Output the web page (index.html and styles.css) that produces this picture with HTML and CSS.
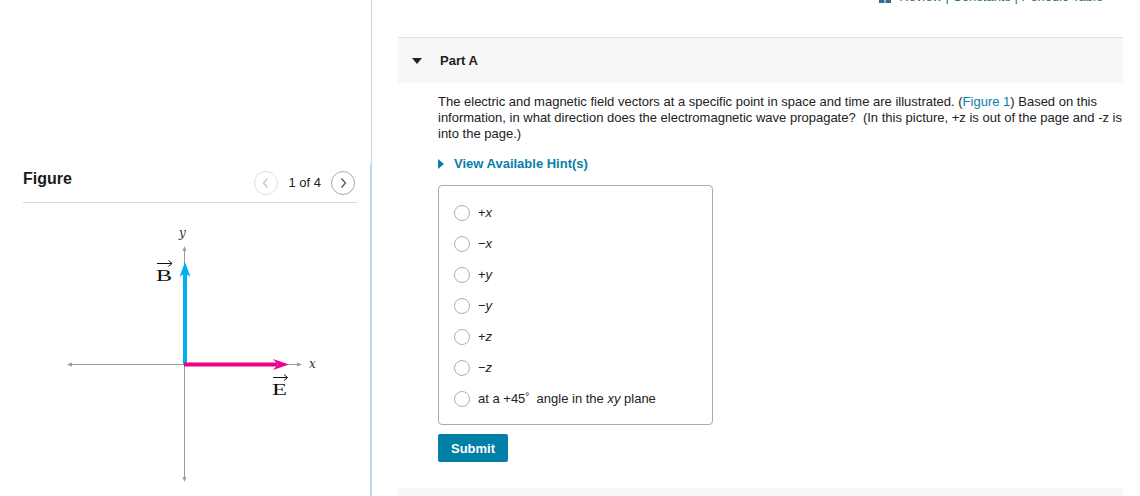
FILE: index.html
```html
<!DOCTYPE html>
<html>
<head>
<meta charset="utf-8">
<link rel="stylesheet" href="styles.css">
</head>
<body>
<div class="page">
  <aside class="left">
    <section class="figure-panel">
      <div class="fig-head">
        <h2 class="fig-title">Figure</h2>
        <div class="pager">
          <span class="pg-btn pg-prev"><svg width="10" height="12" viewBox="0 0 10 12"><path d="M6.5 1.5 L2.5 6 L6.5 10.5" fill="none" stroke="#c4c4c4" stroke-width="1.3"/></svg></span>
          <span class="pg-count">1 of 4</span>
          <span class="pg-btn pg-next"><svg width="10" height="12" viewBox="0 0 10 12"><path d="M3.5 1.5 L7.5 6 L3.5 10.5" fill="none" stroke="#555" stroke-width="1.3"/></svg></span>
        </div>
      </div>
      <svg class="fig-svg" width="334" height="293" viewBox="23 203 334 293">
        <g stroke="#9a9a9a" stroke-width="1" fill="#9a9a9a">
          <line x1="184.5" y1="249" x2="184.5" y2="479"/>
          <line x1="70" y1="364.5" x2="299" y2="364.5"/>
          <path d="M184.5 246 L182.5 251 L186.5 251 Z" stroke="none"/>
          <path d="M184.5 482 L182.5 477 L186.5 477 Z" stroke="none"/>
          <path d="M67 364.5 L72 362.5 L72 366.5 Z" stroke="none"/>
          <path d="M302 364.5 L297 362.5 L297 366.5 Z" stroke="none"/>
        </g>
        <line x1="185" y1="365" x2="185" y2="273" stroke="#00aeef" stroke-width="4"/>
        <path d="M185 262 L190.5 277 L185 273 L179.5 277 Z" fill="#00aeef"/>
        <line x1="184" y1="364.5" x2="277" y2="364.5" stroke="#ec008c" stroke-width="4"/>
        <path d="M289 364.5 L273 359 L278 364.5 L273 370 Z" fill="#ec008c"/>
        <text x="179" y="237" class="ax-lbl">y</text>
        <text x="309" y="368" class="ax-lbl">x</text>
        <text x="156" y="280.5" class="vec-lbl" textLength="16" lengthAdjust="spacingAndGlyphs">B</text>
        <path d="M157 263.5 L171.5 263.5" stroke="#111" stroke-width="1"/>
        <path d="M168.5 260.5 L172 263.5 L168.5 266.5" fill="none" stroke="#111" stroke-width="1"/>
        <text x="272" y="394.5" class="vec-lbl" textLength="15" lengthAdjust="spacingAndGlyphs">E</text>
        <path d="M273 377.5 L287 377.5" stroke="#111" stroke-width="1"/>
        <path d="M284 374.5 L287.5 377.5 L284 380.5" fill="none" stroke="#111" stroke-width="1"/>
      </svg>
    </section>
  </aside>
  <main class="right">
    <div class="topbar">
      <span class="toplinks">
        <svg class="book" width="12" height="10" viewBox="0 0 12 10"><path d="M0 0 H5.5 V10 H0 Z M6.5 0 H12 V10 H6.5 Z" fill="#2c6f8e"/></svg>
        <span>Review | Constants | Periodic Table</span>
      </span>
    </div>
    <div class="part-head">
      <span class="tri-down"></span>
      <span class="part-title">Part A</span>
    </div>
    <div class="part-body">
      <p class="question">The electric and magnetic field vectors at a specific point in space and time are illustrated. (<a class="fig-link">Figure 1</a>) Based on this<br>information, in what direction does the electromagnetic wave propagate?&nbsp; (In this picture, +z is out of the page and -z is<br>into the page.)</p>
      <div class="hint"><span class="tri-right"></span><span>View Available Hint(s)</span></div>
      <div class="options">
        <label class="opt"><span class="radio"></span><span class="opt-text">+<i>x</i></span></label>
        <label class="opt"><span class="radio"></span><span class="opt-text">−<i>x</i></span></label>
        <label class="opt"><span class="radio"></span><span class="opt-text">+<i>y</i></span></label>
        <label class="opt"><span class="radio"></span><span class="opt-text">−<i>y</i></span></label>
        <label class="opt"><span class="radio"></span><span class="opt-text">+<i>z</i></span></label>
        <label class="opt"><span class="radio"></span><span class="opt-text">−<i>z</i></span></label>
        <label class="opt"><span class="radio"></span><span class="opt-text">at a +45<sup class="deg">°</sup>&nbsp; angle in the <i>xy</i> plane</span></label>
      </div>
      <button class="submit">Submit</button>
    </div>
    <div class="next-part"></div>
  </main>
</div>
</body>
</html>
```
FILE: styles.css
```css
html, body {
  margin: 0;
  padding: 0;
  background: #fff;
}
body {
  font-family: "Liberation Sans", Arial, sans-serif;
  color: #222;
  width: 1140px;
  height: 496px;
  overflow: hidden;
}
.page {
  display: flex;
  height: 496px;
}
.left {
  width: 371px;
  flex: none;
  border-right: 1px solid #c5d6e6;
  display: flex;
  flex-direction: column;
  justify-content: flex-end;
}
.figure-panel {
  height: 333px;
  padding: 0 13px 0 23px;
  border-right: 1px solid #c5d6e6;
  box-sizing: border-box;
  width: 371px;
}
.fig-head {
  display: flex;
  align-items: center;
  justify-content: space-between;
  height: 39px;
  border-bottom: 1px solid #d9d9d9;
  padding-right: 2px;
}
.fig-title {
  margin: 0;
  font-size: 16px;
  font-weight: bold;
  color: #1a1a1a;
  position: relative;
  top: -4px;
}
.pager {
  display: flex;
  align-items: center;
  gap: 10px;
}
.pg-btn {
  width: 22px;
  height: 22px;
  border-radius: 50%;
  display: flex;
  align-items: center;
  justify-content: center;
}
.pg-prev { border: 1px solid #dedede; }
.pg-next { border: 1px solid #a8a8a8; }
.pg-count {
  font-size: 13px;
  color: #222;
}
.fig-svg {
  display: block;
}
.ax-lbl {
  font-family: "DejaVu Serif", "Liberation Serif", serif;
  font-style: italic;
  font-size: 12px;
  fill: #333;
}
.vec-lbl {
  font-family: "Liberation Serif", serif;
  font-size: 16px;
  fill: #111;
}
.right {
  flex: 1;
  min-width: 0;
  padding: 0 17px 0 26px;
  display: flex;
  flex-direction: column;
}
.topbar {
  height: 37px;
  border-bottom: 1px solid #e2e2e2;
  display: flex;
  justify-content: flex-end;
  align-items: flex-start;
  padding-right: 20px;
}
.toplinks {
  display: flex;
  align-items: center;
  gap: 8px;
  font-size: 13px;
  color: #2c6f8e;
  margin-top: -11px;
}
.book { position: relative; top: 1px; }
.part-head {
  height: 45px;
  background: #f7f7f7;
  display: flex;
  align-items: center;
  padding-left: 14px;
}
.tri-down {
  width: 0;
  height: 0;
  border-left: 5px solid transparent;
  border-right: 5px solid transparent;
  border-top: 6px solid #222;
  margin-right: 18px;
}
.part-title {
  font-size: 13px;
  font-weight: bold;
  color: #222;
}
.part-body {
  padding-left: 40px;
  flex: 1;
}
.question {
  margin: 11px 0 0;
  font-size: 13px;
  line-height: 16px;
  color: #222;
  white-space: nowrap;
}
.fig-link { color: #0a7ea8; }
.hint {
  margin-top: 14px;
  display: flex;
  align-items: center;
  font-size: 13px;
  line-height: 16px;
  font-weight: bold;
  color: #0a7ea8;
}
.tri-right {
  width: 0;
  height: 0;
  border-top: 5px solid transparent;
  border-bottom: 5px solid transparent;
  border-left: 6px solid #0a7ea8;
  margin-right: 10px;
}
.options {
  margin-top: 13px;
  width: 275px;
  box-sizing: border-box;
  border: 1px solid #ababab;
  border-radius: 4px;
  padding: 11px 0 10px 15px;
  display: flex;
  flex-direction: column;
}
.opt {
  height: 31px;
  display: flex;
  align-items: center;
  font-size: 13px;
  color: #222;
}
.radio {
  width: 14px;
  height: 14px;
  border: 1px solid #b0b0b0;
  border-radius: 50%;
  margin-right: 8px;
  flex: none;
}
.opt-text i { font-style: italic; }
.deg {
  font-size: 10px;
  vertical-align: 3px;
  line-height: 0;
}
.submit {
  margin-top: 9px;
  width: 70px;
  height: 28px;
  border: none;
  border-radius: 2px;
  background: #0180a6;
  color: #fff;
  font-family: "Liberation Sans", Arial, sans-serif;
  font-size: 13px;
  font-weight: bold;
  padding: 0;
  display: block;
}
.next-part {
  height: 8px;
  background: #f7f7f7;
  flex: none;
}
```
